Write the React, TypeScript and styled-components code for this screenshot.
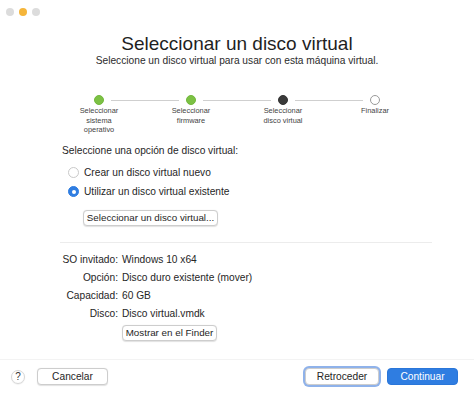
import React from 'react';
import styled, { createGlobalStyle } from 'styled-components';

const GlobalStyle = createGlobalStyle`
  html, body {
    margin: 0;
    padding: 0;
    background: #ffffff;
  }
  body {
    font-family: 'Liberation Sans', Arial, sans-serif;
    color: #262626;
    -webkit-font-smoothing: antialiased;
  }
`;

const Window = styled.div`
  width: 474px;
  height: 395px;
  display: flex;
  flex-direction: column;
  background: #ffffff;
  overflow: hidden;
`;

const TitleBar = styled.div`
  height: 24px;
  display: flex;
  align-items: center;
  gap: 5px;
  padding-left: 6px;
`;

const Light = styled.span<{ $color: string }>`
  width: 8px;
  height: 8px;
  border-radius: 50%;
  background: ${(p) => p.$color};
`;

const Header = styled.div`
  display: flex;
  flex-direction: column;
  align-items: center;
  padding-top: 9px;
`;

const Title = styled.h1`
  margin: 0;
  font-size: 19px;
  font-weight: 400;
  color: #1f1f1f;
  line-height: 22px;
`;

const Subtitle = styled.div`
  font-size: 10.2px;
  line-height: 12px;
  color: #2b2b2b;
`;

const Steps = styled.div`
  display: grid;
  grid-template-columns: repeat(4, 92px);
  margin: 28px 0 0 53px;
`;

const Step = styled.div`
  position: relative;
  display: flex;
  flex-direction: column;
  align-items: center;
`;

const Dot = styled.span<{ $state: 'done' | 'current' | 'todo' }>`
  width: 10px;
  height: 10px;
  border-radius: 50%;
  box-sizing: border-box;
  background: ${(p) =>
    p.$state === 'done' ? '#7cc144' : p.$state === 'current' ? '#3a3a3a' : '#ffffff'};
  border: 1px solid
    ${(p) => (p.$state === 'done' ? '#72b83c' : p.$state === 'current' ? '#333' : '#9a9a9a')};
`;

const Connector = styled.span`
  position: absolute;
  top: 5px;
  left: 58px;
  width: 68px;
  height: 1px;
  background: #cfcfcf;
`;

const StepLabel = styled.div`
  margin-top: 1px;
  font-size: 7.4px;
  line-height: 9.5px;
  text-align: center;
  color: #444;
`;

const Content = styled.div`
  padding: 9px 42px 0 62px;
  flex: 1;
  font-size: 10.2px;
`;

const Prompt = styled.div`
  color: #262626;
  line-height: 13px;
`;

const RadioList = styled.div`
  margin: 9px 0 0 6px;
  display: flex;
  flex-direction: column;
  gap: 5px;
`;

const RadioRow = styled.label`
  display: flex;
  align-items: center;
  gap: 5px;
  height: 14px;
`;

const Radio = styled.span<{ $checked?: boolean }>`
  width: 11px;
  height: 11px;
  border-radius: 50%;
  box-sizing: border-box;
  background: ${(p) => (p.$checked ? '#2f7de1' : '#fff')};
  border: 1px solid ${(p) => (p.$checked ? '#2f7de1' : '#c9c9c9')};
  display: flex;
  align-items: center;
  justify-content: center;

  &::after {
    content: '';
    width: 4px;
    height: 4px;
    border-radius: 50%;
    background: #fff;
    display: ${(p) => (p.$checked ? 'block' : 'none')};
  }
`;

const Button = styled.button<{ $primary?: boolean; $focus?: boolean }>`
  display: block;
  font-family: inherit;
  font-size: 9.8px;
  height: 16px;
  padding: 0;
  border-radius: 4px;
  cursor: default;
  white-space: nowrap;
  text-align: center;
  color: ${(p) => (p.$primary ? '#fff' : '#262626')};
  background: ${(p) => (p.$primary ? '#2f7de1' : '#fff')};
  border: 1px solid ${(p) => (p.$primary ? '#2a76d9' : '#cdcdcd')};
  box-shadow: ${(p) =>
    p.$focus ? '0 0 0 2px #8fb2ea' : p.$primary ? 'none' : '0 0.5px 1px rgba(0,0,0,0.12)'};
  line-height: 14px;
`;

const PickButton = styled(Button)`
  margin: 11px 0 0 21px;
  width: 135px;
`;

const Separator = styled.div`
  height: 1px;
  background: #ececec;
  margin: 16px 0 0 -2px;
`;

const InfoGrid = styled.div`
  display: grid;
  grid-template-columns: 56px auto;
  column-gap: 4px;
  row-gap: 4px;
  margin-top: 10px;
  align-items: center;
`;

const InfoLabel = styled.div`
  text-align: right;
  white-space: nowrap;
  line-height: 14px;
`;

const InfoValue = styled.div`
  white-space: nowrap;
  line-height: 14px;
`;

const FinderButton = styled(Button)`
  justify-self: start;
  width: 95px;
`;

const Footer = styled.div`
  height: 33px;
  border-top: 1px solid #f3f3f3;
  display: flex;
  align-items: center;
  padding: 0 16px 2px 11px;
  gap: 8px;
`;

const Help = styled.span`
  width: 14px;
  height: 14px;
  border-radius: 50%;
  box-sizing: border-box;
  border: 1px solid #d6d6d6;
  box-shadow: 0 0.5px 1px rgba(0, 0, 0, 0.1);
  font-size: 10px;
  display: flex;
  align-items: center;
  justify-content: center;
  color: #333;
  margin-right: 4px;
`;

const Spacer = styled.div`
  flex: 1;
`;

const FooterButton = styled(Button)<{ $w: number }>`
  width: ${(p) => p.$w}px;
  height: 17px;
  font-size: 10.2px;
`;

const steps: { label: string[]; state: 'done' | 'current' | 'todo' }[] = [
  { label: ['Seleccionar', 'sistema', 'operativo'], state: 'done' },
  { label: ['Seleccionar', 'firmware'], state: 'done' },
  { label: ['Seleccionar', 'disco virtual'], state: 'current' },
  { label: ['Finalizar'], state: 'todo' },
];

export default function App() {
  return (
    <Window>
      <GlobalStyle />
      <TitleBar>
        <Light $color="#dcdcdc" />
        <Light $color="#f5b53a" />
        <Light $color="#dcdcdc" />
      </TitleBar>
      <Header>
        <Title>Seleccionar un disco virtual</Title>
        <Subtitle>Seleccione un disco virtual para usar con esta máquina virtual.</Subtitle>
      </Header>
      <Steps>
        {steps.map((s, i) => (
          <Step key={i}>
            <Dot $state={s.state} />
            {i < steps.length - 1 && <Connector />}
            <StepLabel>
              {s.label.map((l) => (
                <div key={l}>{l}</div>
              ))}
            </StepLabel>
          </Step>
        ))}
      </Steps>
      <Content>
        <Prompt>Seleccione una opción de disco virtual:</Prompt>
        <RadioList>
          <RadioRow>
            <Radio />
            Crear un disco virtual nuevo
          </RadioRow>
          <RadioRow>
            <Radio $checked />
            Utilizar un disco virtual existente
          </RadioRow>
        </RadioList>
        <PickButton>Seleccionar un disco virtual...</PickButton>
        <Separator />
        <InfoGrid>
          <InfoLabel>SO invitado:</InfoLabel>
          <InfoValue>Windows 10 x64</InfoValue>
          <InfoLabel>Opción:</InfoLabel>
          <InfoValue>Disco duro existente (mover)</InfoValue>
          <InfoLabel>Capacidad:</InfoLabel>
          <InfoValue>60 GB</InfoValue>
          <InfoLabel>Disco:</InfoLabel>
          <InfoValue>Disco virtual.vmdk</InfoValue>
          <span />
          <FinderButton>Mostrar en el Finder</FinderButton>
        </InfoGrid>
      </Content>
      <Footer>
        <Help>?</Help>
        <FooterButton $w={71}>Cancelar</FooterButton>
        <Spacer />
        <FooterButton $w={74} $focus>
          Retroceder
        </FooterButton>
        <FooterButton $w={71} $primary>
          Continuar
        </FooterButton>
      </Footer>
    </Window>
  );
}
